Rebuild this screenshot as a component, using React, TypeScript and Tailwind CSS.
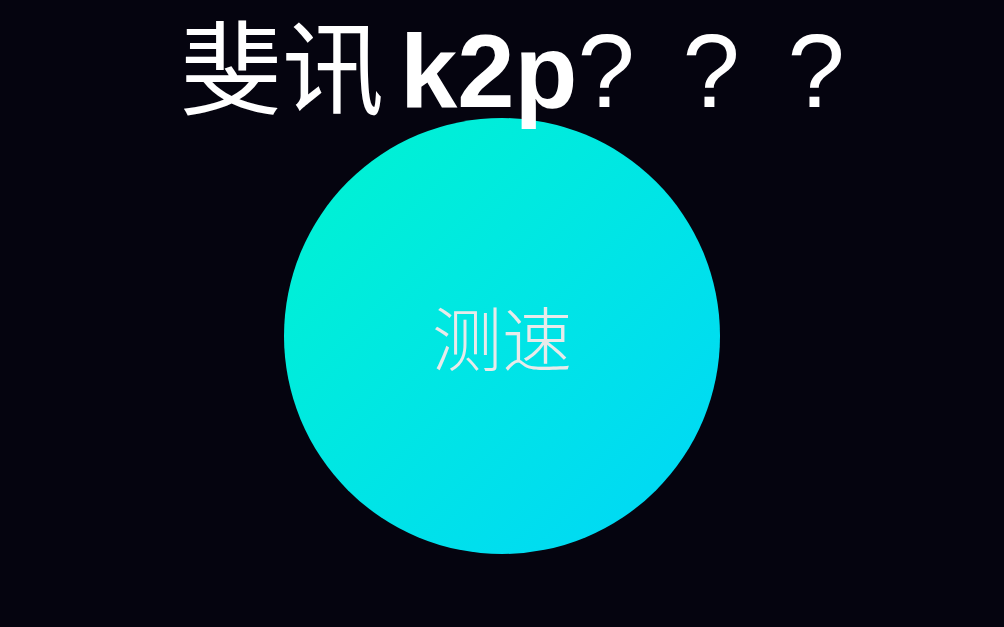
export default function App() {
  return (
    <div className="w-[1004px] h-[627px] bg-[#05040f] overflow-hidden flex flex-col items-center">
      <div className="relative z-10 w-full pt-[2px] pl-[180px] flex items-baseline text-white leading-[1.2] whitespace-nowrap">
        <span className="text-[102px] font-normal" style={{ fontFamily: '"Noto Sans CJK SC", sans-serif' }}>
          斐讯
        </span>
        <span
          className="ml-[16px] text-[103px] font-bold"
          style={{ fontFamily: '"Liberation Sans", Arial, sans-serif' }}
        >
          k2p
        </span>
        <span
          className="flex text-[103px] font-normal"
          style={{ fontFamily: '"Liberation Sans", Arial, sans-serif' }}
        >
          <span className="inline-block w-[105px]">?</span>
          <span className="inline-block w-[105px]">?</span>
          <span className="inline-block">?</span>
        </span>
      </div>
      {/* the title's descender sits over the top of the button */}
      <button className="-mt-[16px] w-[436px] h-[436px] shrink-0 rounded-full bg-gradient-to-br from-[#02f4d0] to-[#00d6f8] flex items-center justify-center">
        <span
          className="text-[#e8eaea] text-[70px] leading-[1.2] font-light"
          style={{ fontFamily: '"Noto Sans CJK SC", sans-serif' }}
        >
          测速
        </span>
      </button>
    </div>
  );
}
